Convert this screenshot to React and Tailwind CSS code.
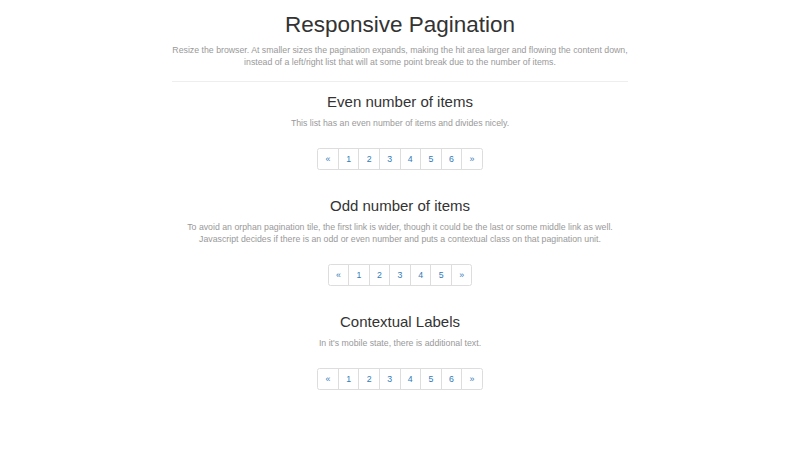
import React from 'react';

const Pager = ({ count }) => {
  const items = ['«', ...Array.from({ length: count }, (_, i) => String(i + 1)), '»'];
  return (
    <div className="flex justify-center">
      <ul className="flex">
        {items.map((label, i) => (
          <li key={i} className={i === 0 ? '' : '-ml-px'}>
            <a
              href="#"
              className={
                'block border border-[#ddd] bg-white px-[7.35px] py-[3.75px] text-[8.75px] leading-[12.5px] text-[#337ab7] ' +
                (i === 0 ? 'rounded-l-[2.5px] ' : '') +
                (i === items.length - 1 ? 'rounded-r-[2.5px]' : '')
              }
            >
              {label}
            </a>
          </li>
        ))}
      </ul>
    </div>
  );
};

const Section = ({ title, children, count }) => (
  <div className="mt-[28px] text-center">
    <h3 className="text-[15px] leading-[16.5px] text-[#333]">{title}</h3>
    <p className="mt-[6.25px] text-[8.75px] leading-[12.5px] text-[#999]">{children}</p>
    <div className="mt-[18.5px]">
      <Pager count={count} />
    </div>
  </div>
);

export default function App() {
  return (
    <div className="min-h-screen bg-white font-['Liberation_Sans',Arial,sans-serif]">
      <div className="mx-auto w-[456px] pt-[12.5px]">
        <h1 className="text-center text-[22.5px] leading-[24.75px] text-[#333]">Responsive Pagination</h1>
        <p className="mt-[6.25px] text-center text-[8.75px] leading-[12.5px] text-[#999]">
          Resize the browser. At smaller sizes the pagination expands, making the hit area larger and flowing the content down,
          <br />
          instead of a left/right list that will at some point break due to the number of items.
        </p>
        <hr className="mt-[12.5px] border-t border-[#eee]" />
        <div className="-mt-[28px] pt-[12px]">
          <Section title="Even number of items" count={6}>
            This list has an even number of items and divides nicely.
          </Section>
          <Section title="Odd number of items" count={5}>
            To avoid an orphan pagination tile, the first link is wider, though it could be the last or some middle link as well.
            <br />
            Javascript decides if there is an odd or even number and puts a contextual class on that pagination unit.
          </Section>
          <Section title="Contextual Labels" count={6}>
            In it's mobile state, there is additional text.
          </Section>
        </div>
      </div>
    </div>
  );
}
